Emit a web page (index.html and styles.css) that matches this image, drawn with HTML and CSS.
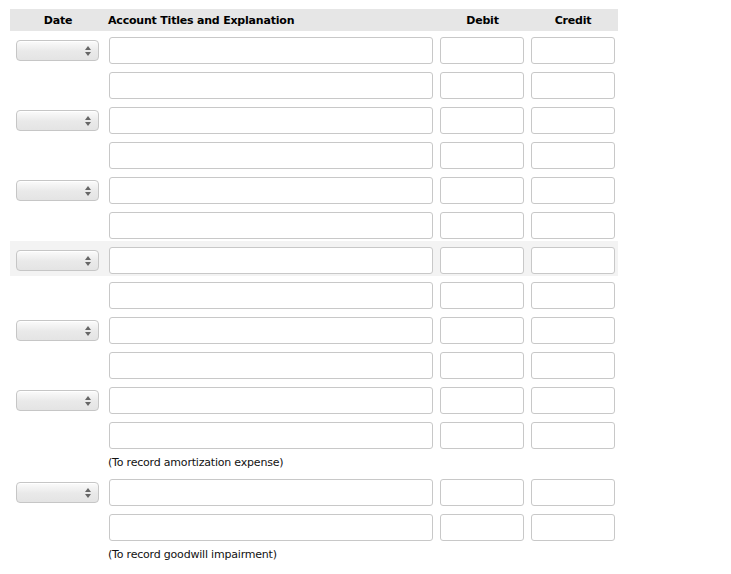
FILE: index.html
```html
<!DOCTYPE html>
<html>
<head>
<meta charset="utf-8">
<link rel="stylesheet" href="styles.css">
</head>
<body>
<div class="journal">
  <div class="head">
    <div class="h-date">Date</div>
    <div class="h-acct">Account Titles and Explanation</div>
    <div class="h-num">Debit</div>
    <div class="h-num">Credit</div>
  </div>

  <div class="row"><div class="c-date"><span class="sel"></span></div><div class="c-acct"><span class="inp acct"></span></div><div class="c-num"><span class="inp num"></span></div><div class="c-num"><span class="inp num"></span></div></div>
  <div class="row"><div class="c-date"></div><div class="c-acct"><span class="inp acct"></span></div><div class="c-num"><span class="inp num"></span></div><div class="c-num"><span class="inp num"></span></div></div>
  <div class="row"><div class="c-date"><span class="sel"></span></div><div class="c-acct"><span class="inp acct"></span></div><div class="c-num"><span class="inp num"></span></div><div class="c-num"><span class="inp num"></span></div></div>
  <div class="row"><div class="c-date"></div><div class="c-acct"><span class="inp acct"></span></div><div class="c-num"><span class="inp num"></span></div><div class="c-num"><span class="inp num"></span></div></div>
  <div class="row"><div class="c-date"><span class="sel"></span></div><div class="c-acct"><span class="inp acct"></span></div><div class="c-num"><span class="inp num"></span></div><div class="c-num"><span class="inp num"></span></div></div>
  <div class="row"><div class="c-date"></div><div class="c-acct"><span class="inp acct"></span></div><div class="c-num"><span class="inp num"></span></div><div class="c-num"><span class="inp num"></span></div></div>
  <div class="row hover"><div class="c-date"><span class="sel"></span></div><div class="c-acct"><span class="inp acct"></span></div><div class="c-num"><span class="inp num"></span></div><div class="c-num"><span class="inp num"></span></div></div>
  <div class="row"><div class="c-date"></div><div class="c-acct"><span class="inp acct"></span></div><div class="c-num"><span class="inp num"></span></div><div class="c-num"><span class="inp num"></span></div></div>
  <div class="row"><div class="c-date"><span class="sel"></span></div><div class="c-acct"><span class="inp acct"></span></div><div class="c-num"><span class="inp num"></span></div><div class="c-num"><span class="inp num"></span></div></div>
  <div class="row"><div class="c-date"></div><div class="c-acct"><span class="inp acct"></span></div><div class="c-num"><span class="inp num"></span></div><div class="c-num"><span class="inp num"></span></div></div>
  <div class="row"><div class="c-date"><span class="sel"></span></div><div class="c-acct"><span class="inp acct"></span></div><div class="c-num"><span class="inp num"></span></div><div class="c-num"><span class="inp num"></span></div></div>
  <div class="row"><div class="c-date"></div><div class="c-acct"><span class="inp acct"></span></div><div class="c-num"><span class="inp num"></span></div><div class="c-num"><span class="inp num"></span></div></div>
  <div class="note"><div></div><div class="note-text">(To record amortization expense)</div></div>

  <div class="row"><div class="c-date"><span class="sel"></span></div><div class="c-acct"><span class="inp acct"></span></div><div class="c-num"><span class="inp num"></span></div><div class="c-num"><span class="inp num"></span></div></div>
  <div class="row"><div class="c-date"></div><div class="c-acct"><span class="inp acct"></span></div><div class="c-num"><span class="inp num"></span></div><div class="c-num"><span class="inp num"></span></div></div>
  <div class="note"><div></div><div class="note-text">(To record goodwill impairment)</div></div>
</div>
</body>
</html>
```

FILE: styles.css
```css
html, body {
  margin: 0;
  padding: 0;
  background: #fff;
}
body {
  font-family: "DejaVu Sans", Verdana, sans-serif;
  color: #000;
}
.journal {
  margin: 9px 0 0 10px;
  width: 608px;
}
.head, .row, .note {
  display: grid;
  grid-template-columns: 96px 331px 91px 90px;
}
.head {
  height: 22px;
  background: #e6e6e6;
  align-items: center;
  font-weight: bold;
  font-size: 11px;
  letter-spacing: -0.2px;
}
.h-date { text-align: center; }
.h-acct { padding-left: 2px; }
.h-num { text-align: center; }
.row {
  height: 35px;
  box-sizing: border-box;
  padding-top: 6px;
}
.row.hover { background: #f3f3f3; }
.c-date { padding: 3px 0 0 6px; }
.c-acct { padding-left: 3px; }
.c-num { padding-left: 3px; }
.inp {
  display: block;
  box-sizing: border-box;
  height: 27px;
  background: #fff;
  border: 1px solid #c8c8c8;
  border-radius: 3px;
}
.inp.acct { width: 324px; }
.inp.num { width: 84px; }
.sel {
  display: block;
  position: relative;
  box-sizing: border-box;
  width: 83px;
  height: 21px;
  border: 1px solid #c6c6c6;
  border-radius: 4px;
  background: linear-gradient(#fbfbfb, #e9e9e9 55%, #e4e4e4);
  box-shadow: inset 0 1px 0 #fff;
}
.sel::before, .sel::after {
  content: "";
  position: absolute;
  right: 7px;
  width: 0;
  height: 0;
  border-left: 3px solid transparent;
  border-right: 3px solid transparent;
}
.sel::before {
  top: 5px;
  border-bottom: 4px solid #666;
}
.sel::after {
  top: 11px;
  border-top: 4px solid #666;
}
.note {
  height: 22px;
  align-items: center;
}
.note-text {
  padding-left: 2px;
  font-size: 11px;
  color: #111;
  letter-spacing: -0.2px;
}
```
